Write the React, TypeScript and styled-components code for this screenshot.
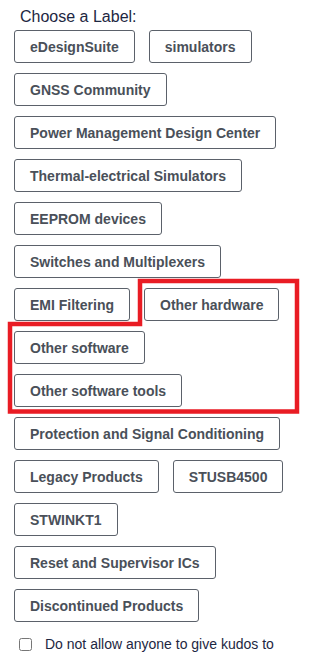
import React from "react";
import styled, { createGlobalStyle } from "styled-components";

const Global = createGlobalStyle`
  html, body { margin: 0; padding: 0; background: #ffffff; }
  body { font-family: "Liberation Sans", Arial, sans-serif; }
`;

const Page = styled.div`
  position: relative;
  width: 320px;
  min-height: 654px;
  box-sizing: border-box;
  padding: 8px 0 0 14px;
`;

const Heading = styled.div`
  font-size: 16px;
  line-height: 18px;
  color: #1d2742;
  padding-left: 6px;
  margin-bottom: 4px;
`;

const LabelList = styled.div`
  display: flex;
  flex-wrap: wrap;
  gap: 10px 14px;
  width: 290px;
`;

const LabelButton = styled.button`
  box-sizing: border-box;
  height: 33px;
  padding: 0 15px;
  border: 1px solid #5b616a;
  border-radius: 3px;
  background: #ffffff;
  color: #4a5059;
  font-family: "Liberation Sans", Arial, sans-serif;
  font-weight: 700;
  font-size: 14px;
  line-height: 16px;
  white-space: nowrap;
  cursor: pointer;
`;

const CheckRow = styled.label`
  display: flex;
  align-items: center;
  gap: 13px;
  margin-top: 14px;
  padding-left: 5px;
  font-size: 14px;
  line-height: 16px;
  color: #1d2742;
`;

const Check = styled.input`
  width: 13px;
  height: 13px;
  margin: 0;
`;

const Highlight = styled.svg`
  position: absolute;
  left: 0;
  top: 0;
  pointer-events: none;
`;

const labels = [
  "eDesignSuite",
  "simulators",
  "GNSS Community",
  "Power Management Design Center",
  "Thermal-electrical Simulators",
  "EEPROM devices",
  "Switches and Multiplexers",
  "EMI Filtering",
  "Other hardware",
  "Other software",
  "Other software tools",
  "Protection and Signal Conditioning",
  "Legacy Products",
  "STUSB4500",
  "STWINKT1",
  "Reset and Supervisor ICs",
  "Discontinued Products",
];

export default function App() {
  return (
    <>
      <Global />
      <Page>
        <Heading>Choose a Label:</Heading>
        <LabelList>
          {labels.map((l) => (
            <LabelButton key={l} type="button">
              {l}
            </LabelButton>
          ))}
        </LabelList>
        <CheckRow>
          <Check type="checkbox" />
          Do not allow anyone to give kudos to
        </CheckRow>
        <Highlight width="320" height="654" viewBox="0 0 320 654">
          <polygon
            points="140,281 297,281 297,411.5 10,411.5 10,324 140,324"
            fill="none"
            stroke="#e91c24"
            strokeWidth="4.5"
          />
        </Highlight>
      </Page>
    </>
  );
}
